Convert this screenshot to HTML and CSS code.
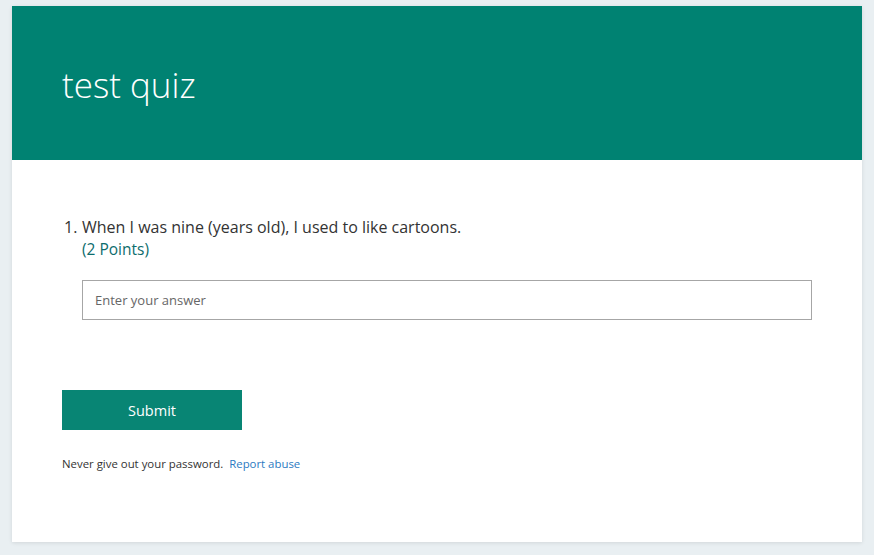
FILE: index.html
```html
<!DOCTYPE html>
<html>
<head>
<meta charset="utf-8">
<link rel="stylesheet" href="styles.css">
</head>
<body>
<div class="card">
  <div class="header"><h1 class="title">test quiz</h1></div>
  <div class="content">
    <div class="question">
      <span class="qnum">1.</span>
      <div class="qbody">
        <div class="qtext">When I was nine (years old), I used to like cartoons.</div>
        <div class="points">(2 Points)</div>
        <input class="answer" type="text" placeholder="Enter your answer">
      </div>
    </div>
    <button class="submit">Submit</button>
    <div class="footer">Never give out your password. <a class="link" href="#">Report abuse</a></div>
  </div>
</div>
</body>
</html>
```
FILE: styles.css
```css
html, body { margin: 0; padding: 0; }
body {
  background: #e9eff2;
  padding: 6px 12px 13px 12px;
  font-family: "Open Sans", "Liberation Sans", sans-serif;
}
.card {
  width: 850px;
  height: 536px;
  background: #fff;
  box-shadow: 0 1px 4px rgba(0,0,0,0.1);
  display: flex;
  flex-direction: column;
}
.header {
  background: #008272;
  height: 154px;
  padding-left: 50px;
  display: flex;
  align-items: center;
  box-sizing: border-box;
}
.title {
  margin: 0;
  color: #fff;
  font-weight: 300;
  font-size: 35px;
  line-height: 40px;
  margin-top: 4px;
}
.content {
  padding: 56px 50px 0 50px;
}
.question {
  display: flex;
  color: #333;
}
.qnum {
  width: 20px;
  text-align: left;
  padding-left: 2px;
  font-size: 16px;
  line-height: 22px;
  box-sizing: border-box;
}
.qbody { flex: 1; }
.qtext { font-size: 16px; line-height: 22px; }
.points { font-size: 15.5px; line-height: 22px; color: #0d6d6d; }
.answer {
  display: block;
  margin-top: 20px;
  width: 730px;
  height: 40px;
  box-sizing: border-box;
  border: 1px solid #a6a6a6;
  padding: 0 12px;
  font-family: "Open Sans", "Liberation Sans", sans-serif;
  font-size: 13px;
  color: #333;
  outline: none;
}
.answer::placeholder { color: #666; }
.submit {
  display: block;
  margin-top: 70px;
  width: 180px;
  height: 40px;
  background: #088574;
  color: #fff;
  border: none;
  font-family: "Open Sans", "Liberation Sans", sans-serif;
  font-size: 14.5px;
  padding: 0;
}
.footer {
  margin-top: 26px;
  font-size: 11.4px;
  color: #333;
}
.link { color: #2b7ac2; text-decoration: none; margin-left: 3px; }
```
